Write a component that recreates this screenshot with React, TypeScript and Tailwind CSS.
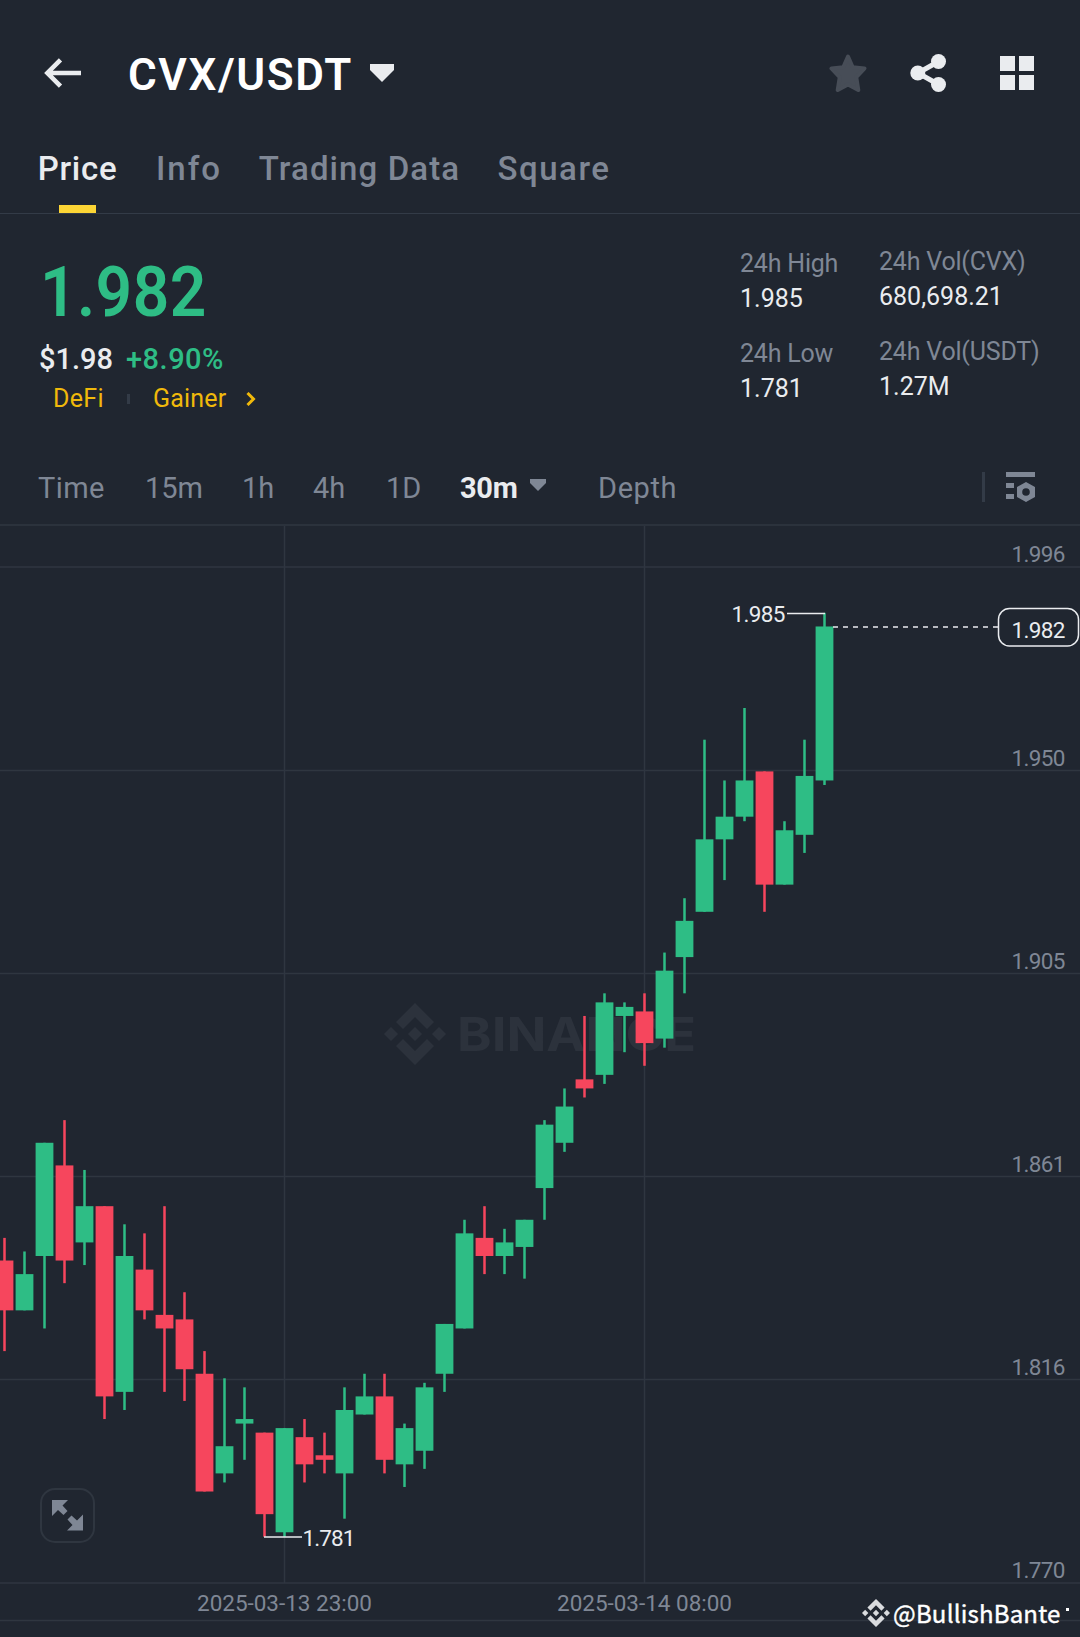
import React, { useState } from 'react';

interface Candle {
  open: number;
  high: number;
  low: number;
  close: number;
}

const UP = '#2ebd85';
const DOWN = '#f6465d';
const GRID = '#2f3640';

// prices are kept in ticks of 0.001: [open, high, low, close]
const RAW: [number, number, number, number][] = [
  [1842, 1847, 1822, 1831],
  [1831, 1844, 1831, 1839],
  [1843, 1868, 1827, 1868],
  [1863, 1873, 1837, 1842],
  [1846, 1862, 1841, 1854],
  [1854, 1854, 1807, 1812],
  [1813, 1850, 1809, 1843],
  [1840, 1848, 1829, 1831],
  [1830, 1854, 1813, 1827],
  [1829, 1835, 1811, 1818],
  [1817, 1822, 1791, 1791],
  [1795, 1816, 1793, 1801],
  [1806, 1814, 1798, 1807],
  [1804, 1804, 1781, 1786],
  [1782, 1805, 1781, 1805],
  [1803, 1807, 1793, 1797],
  [1799, 1804, 1795, 1798],
  [1795, 1814, 1785, 1809],
  [1808, 1817, 1808, 1812],
  [1812, 1817, 1795, 1798],
  [1797, 1806, 1792, 1805],
  [1800, 1815, 1796, 1814],
  [1817, 1828, 1813, 1828],
  [1827, 1851, 1827, 1848],
  [1847, 1854, 1839, 1843],
  [1843, 1849, 1839, 1846],
  [1845, 1851, 1838, 1851],
  [1858, 1873, 1851, 1872],
  [1868, 1880, 1866, 1876],
  [1882, 1896, 1878, 1880],
  [1883, 1901, 1881, 1899],
  [1896, 1899, 1888, 1898],
  [1897, 1901, 1885, 1890],
  [1891, 1910, 1889, 1906],
  [1909, 1922, 1901, 1917],
  [1919, 1957, 1919, 1935],
  [1935, 1948, 1926, 1940],
  [1940, 1964, 1939, 1948],
  [1950, 1950, 1919, 1925],
  [1925, 1939, 1925, 1937],
  [1936, 1957, 1932, 1949],
  [1948, 1985, 1947, 1982],
];

const CANDLES: Candle[] = RAW.map(([open, high, low, close]) => ({ open, high, low, close }));

const PRICE_LINES = [
  { label: '1.996', y: 567 },
  { label: '1.950', y: 770.5 },
  { label: '1.905', y: 973.5 },
  { label: '1.861', y: 1176.5 },
  { label: '1.816', y: 1379.5 },
  { label: '1.770', y: 1583 },
];

const TIME_LINES = [
  { label: '2025-03-13 23:00', x: 284.5 },
  { label: '2025-03-14 08:00', x: 644.5 },
];

const yOf = (ticks: number) => 1536.8 - (ticks - 1781) * 4.529;
const xOf = (i: number) => 4.5 + i * 20;

const TABS = [
  { name: 'Price', style: 'w-[77px] tracking-[0.7px]' },
  { name: 'Info', style: 'ml-[3px] w-[64px] tracking-[2px]' },
  { name: 'Trading Data', style: 'w-[201px] tracking-[1.1px]' },
  { name: 'Square', style: 'w-[112px] tracking-[1.5px]' },
];

const INTERVALS = [
  { name: 'Time', style: 'w-[107px] tracking-[0.4px]' },
  { name: '15m', style: 'w-[97px]' },
  { name: '1h', style: 'w-[71px]' },
  { name: '4h', style: 'w-[73px]' },
  { name: '1D', style: 'w-[74px]' },
];

const BinanceMark = ({ className, x, y, size }: { className?: string; x?: number; y?: number; size: number }) => (
  <svg className={className} x={x} y={y} width={size} height={size} viewBox="0 0 62 62" fill="currentColor">
    <path d="M31 0 50 19 43 26 31 14 19 26 12 19Z" />
    <path d="M31 62 50 43 43 36 31 48 19 36 12 43Z" />
    <path d="M31 24 38 31 31 38 24 31Z" />
    <path d="M7 24 14 31 7 38 0 31Z" />
    <path d="M55 24 62 31 55 38 48 31Z" />
  </svg>
);

const Header = () => (
  <header className="h-[146px] flex items-center pl-11 pr-[46px] text-[#eaecef]">
    <svg className="w-[37px] h-[30px] shrink-0" viewBox="0 0 37 30" fill="none" stroke="currentColor" strokeWidth="4.6">
      <path d="M37 15H5M16.5 1.8 3.4 15l13.1 13.2" />
      <path d="M1 15 9 9.500V20.500Z" fill="currentColor" stroke="none" />
    </svg>
    <h1 className="ml-[47px] mt-1 w-[225px] whitespace-nowrap text-[44px] leading-[52px] font-semibold tracking-[1.6px] text-white">CVX/USDT</h1>
    <svg className="ml-[17px] w-6 h-[18px]" viewBox="0 0 24 18" fill="currentColor">
      <path d="M0 0H24V6L12 18 0 6Z" />
    </svg>
    <div className="ml-auto flex items-center">
      <svg className="w-[38px] h-[40px] text-[#474d57]" viewBox="0 0 38 40" fill="currentColor" stroke="currentColor" strokeWidth="4" strokeLinejoin="round">
        <path d="M19 3.500 23.700 14.200 35.500 15.400 27.300 24.200 29.300 37 19 31.500 8.700 37 10.700 24.200 2.500 15.400 14.300 14.200Z" />
      </svg>
      <svg className="ml-[43px] w-[37px] h-[40px]" viewBox="0 0 37 40" fill="currentColor">
        <path d="M28.500 8.500 8 20 28.500 31.500" fill="none" stroke="currentColor" strokeWidth="5" />
        <circle cx="28.500" cy="8.500" r="7.500" />
        <circle cx="7.800" cy="20" r="7.500" />
        <circle cx="28.500" cy="31.500" r="7.500" />
      </svg>
      <div className="ml-[53px] grid grid-cols-2 gap-1">
        {[0, 1, 2, 3].map(n => (
          <span key={n} className="w-[15px] h-[15px] bg-[#eaecef]"></span>
        ))}
      </div>
    </div>
  </header>
);

const Stat = ({ label, value }: { label: string; value: string }) => (
  <div className="h-[90px] whitespace-nowrap">
    <p className="text-[25px] leading-[35px] tracking-[-0.2px] text-[#7f8795]">{label}</p>
    <p className="text-[25px] leading-[35px] text-[#eaecef]">{value}</p>
  </div>
);

const Summary = () => (
  <section className="h-[236px] flex justify-between pl-[39px] pt-[28px] text-[#eaecef]">
    <div>
      <p className="w-[190px] origin-left scale-x-[0.915] pl-px text-[70px] leading-[100px] font-semibold tracking-[0.5px] text-[#2ebd85]">1.982</p>
      <div className="flex text-[29px] leading-[34px] font-medium">
        <span className="w-[87px]">$1.98</span>
        <span className="tracking-[0.5px] text-[#2ebd85]">+8.90%</span>
      </div>
      <div className="mt-[6px] pl-[14px] flex items-center text-[25px] leading-[34px] text-[#f0b90b]">
        <span className="w-[74px] tracking-[0.3px]">DeFi</span>
        <span className="w-[3px] h-[10px] bg-[#333b47]"></span>
        <span className="ml-[23px] w-[93px] tracking-[0.2px]">Gainer</span>
        <svg className="w-[10px] h-[14px]" viewBox="0 0 10 14" fill="none" stroke="currentColor" strokeWidth="3">
          <path d="M1.500 1 7.500 7 1.500 13" />
        </svg>
      </div>
    </div>
    <div className="flex">
      <div className="w-[139px] pt-[4px]">
        <Stat label="24h High" value="1.985" />
        <Stat label="24h Low" value="1.781" />
      </div>
      <div className="w-[201px] pt-[2px]">
        <Stat label="24h Vol(CVX)" value="680,698.21" />
        <Stat label="24h Vol(USDT)" value="1.27M" />
      </div>
    </div>
  </section>
);

const IntervalBar = () => (
  <div className="h-[76px] flex items-center pl-[38px] pr-[45px] border-b-2 border-[#2b323c] text-[29px] text-[#7f8795]">
    {INTERVALS.map(item => (
      <button key={item.name} className={`${item.style} pt-[3px] text-left`}>{item.name}</button>
    ))}
    <button className="w-[138px] flex items-center font-bold text-[#eaecef]">
      <span className="w-[70px] pt-[3px] text-left tracking-[-0.3px]">30m</span>
      <svg className="w-4 h-3 mb-1 text-[#7f8795]" viewBox="0 0 16 12" fill="currentColor">
        <path d="M0 0H16V4L8 12 0 4Z" />
      </svg>
    </button>
    <button className="pt-[3px] tracking-[0.6px]">Depth</button>
    <span className="ml-auto w-[3px] h-[30px] bg-[#333b47]"></span>
    <svg className="ml-[21px] w-[29px] h-[30px]" viewBox="0 0 29 30" fill="currentColor">
      <path d="M0 0H29V5H0ZM0 11H8V16H0ZM0 22H8V27H0Z" />
      <path fillRule="evenodd" d="M20 10 29 15V25L20 30 11 25V15ZM20 16.200A3.800 3.800 0 1 0 20 23.800 3.800 3.800 0 1 0 20 16.200Z" />
    </svg>
  </div>
);

const Chart = () => (
  <svg className="block w-[1080px] h-[1111px]" viewBox="0 526 1080 1111">
    <g stroke={GRID} strokeWidth="1.500">
      {PRICE_LINES.map(l => <line key={l.label} x1="0" x2="1080" y1={l.y} y2={l.y} />)}
      {TIME_LINES.map(l => <line key={l.label} x1={l.x} x2={l.x} y1="526" y2="1583" />)}
      <line x1="0" x2="1080" y1="1620.500" y2="1620.500" />
    </g>

    <g className="text-[#2c323c]">
      <BinanceMark x={384} y={1003} size={62} />
      <text x="457" y="1051" fontSize="47" fontWeight="700" textLength="239" lengthAdjust="spacingAndGlyphs" fill="currentColor" className="font-[Inter,sans-serif]">BINANCE</text>
    </g>

    {CANDLES.map((c, i) => {
      const color = c.close >= c.open ? UP : DOWN;
      const top = yOf(Math.max(c.open, c.close));
      const bottom = yOf(Math.min(c.open, c.close));
      return (
        <g key={i} fill={color}>
          <rect x={xOf(i) - 1.25} y={yOf(c.high)} width="2.500" height={yOf(c.low) - yOf(c.high)} />
          <rect x={xOf(i) - 8.9} y={top} width="17.800" height={bottom - top} />
        </g>
      );
    })}

    <g fontSize="22.500" fill="#7f8795">
      {PRICE_LINES.map(l => (
        <text key={l.label} x="1011.500" y={l.y - 5} textLength="54">{l.label}</text>
      ))}
      {TIME_LINES.map(l => (
        <text key={l.label} x={l.x - 87.5} y="1611" textLength="175">{l.label}</text>
      ))}
    </g>

    {/* period high / low markers */}
    <g stroke="#eaecef" strokeWidth="1.500">
      <line x1="787" x2="825" y1="613.500" y2="613.500" />
      <line x1="264" x2="302" y1="1537" y2="1537" />
      <line x1="833" x2="998" y1="627" y2="627" strokeDasharray="5 5" />
    </g>
    <rect x="998.500" y="608.500" width="80" height="37.500" rx="11" fill="#202630" stroke="#eaecef" strokeWidth="1.500" />
    <g fontSize="22.500" fill="#eaecef">
      <text x="731.500" y="621.500" textLength="54">1.985</text>
      <text x="302.500" y="1546" textLength="53">1.781</text>
      <text x="1011.500" y="638" textLength="54">1.982</text>
    </g>

    {/* fullscreen button */}
    <rect x="41" y="1489" width="53" height="53" rx="14" fill="#202630" stroke={GRID} strokeWidth="2" />
    <g fill="#7f8795">
      <path d="M52 1500H68L62.500 1505.500 67.500 1511 63.500 1515 58 1510 52 1516Z" />
      <path d="M83 1530.500H67L72.500 1525 67.500 1519.500 71.500 1515.500 77 1520.500 83 1514.500Z" />
    </g>
  </svg>
);

const App: React.FC = () => {
  const [activeTab, setActiveTab] = useState('Price');

  return (
    <div className="relative w-[1080px] h-[1637px] overflow-hidden bg-[#202630] font-[Roboto,'Liberation_Sans',sans-serif]">
      <Header />

      <nav className="h-[68px] flex gap-[38px] pl-[39px] border-b border-[#333b47]">
        {TABS.map(tab => (
          <button
            key={tab.name}
            onClick={() => setActiveTab(tab.name)}
            className={`${tab.style} flex flex-col items-center justify-between whitespace-nowrap text-[33px] leading-[46px] font-medium ${activeTab === tab.name ? 'text-[#eaecef]' : 'text-[#7f8795]'}`}
          >
            {tab.name}
            {activeTab === tab.name && <span className="w-[37px] h-2 bg-[#fcd535]"></span>}
          </button>
        ))}
      </nav>

      <Summary />
      <IntervalBar />
      <Chart />

      <div className="absolute left-[862px] top-[1596px] flex items-center text-white">
        <BinanceMark className="text-[#d9dbde]" size={28} />
        <span className="ml-[3px] w-[173px] whitespace-nowrap text-[24px] leading-[34px] tracking-[0.2px] font-['Noto_Sans_CJK_SC',sans-serif] [-webkit-text-stroke:0.4px_white]">@BullishBante</span>
        <span className="mb-2 w-[3px] h-[3px] bg-white"></span>
      </div>
    </div>
  );
};

export default App;
